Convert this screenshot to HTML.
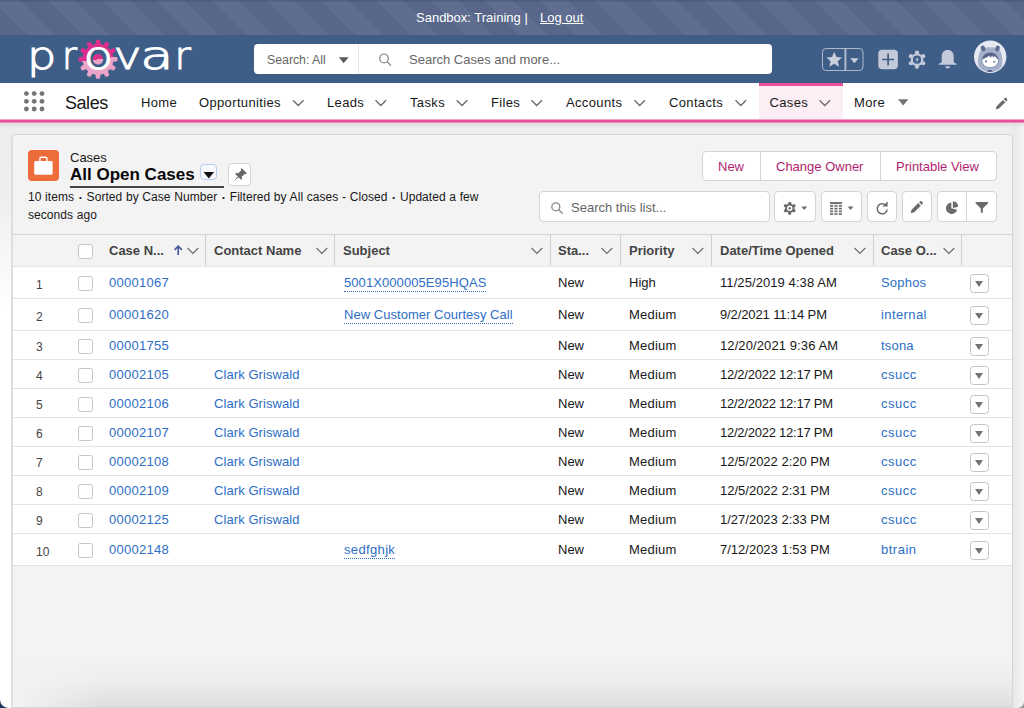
<!DOCTYPE html>
<html lang="en">
<head>
<meta charset="utf-8">
<title>Cases | Salesforce</title>
<style>
*{box-sizing:border-box;margin:0;padding:0}
html,body{width:1024px;height:708px;overflow:hidden}
body{position:relative;background:#fff;font-family:"Liberation Sans",sans-serif;font-size:13px;color:#181818}
.abs{position:absolute}
a{text-decoration:none;color:#2d6ec6}
/* sandbox banner */
#sandbox{left:0;top:0;width:1024px;height:35px;background:#5b6a8f;background-image:linear-gradient(rgba(0,0,20,0.16),rgba(0,0,20,0) 2.500px),repeating-linear-gradient(45deg,#576689 0,#576689 19.3px,#5e6d90 19.3px,#5e6d90 38.7px);color:#fff;font-size:13px}
#sandbox .t1{left:416px;top:10px;white-space:nowrap}
#sandbox .t2{left:540px;top:10px;white-space:nowrap;text-decoration:underline;color:#fff}
/* header */
#hdr{left:0;top:35px;width:1024px;height:48px;background:#3e5e88}
#gsearch{left:254px;top:9px;width:518px;height:30px;background:#fff;border-radius:4px}
#gsearch .sel{left:13px;top:9px;color:#666;font-size:12.300px;white-space:nowrap}
#gsearch .div{left:104px;top:0;width:1px;height:30px;background:#e5e5e5}
#gsearch .ph{left:155px;top:8px;color:#666;font-size:13px;white-space:nowrap}
/* nav */
#nav{left:0;top:83px;width:1024px;height:36px;background:#fff}
#navline{z-index:3;left:0;top:119px;width:1024px;height:9px;background:linear-gradient(#f3a2c9 0,#f3a2c9 1px,#e8509b 1px,#e8509b 3px,#eb8ab8 3px,#eb8ab8 4px,rgba(0,0,0,0.07) 4px,rgba(0,0,0,0) 9px)}
#nav .app{left:65px;top:10px;font-size:18px;letter-spacing:-0.45px;color:#181818}
#nav .it{top:12px;font-size:13px;letter-spacing:0.35px;color:#181818;white-space:nowrap}
#nav .sel{left:759px;top:0;width:84px;height:36px;background:#fdeef5;border-top:3px solid #e8509b}
/* card */
#card{left:11px;top:134px;width:1002px;height:574px;border:1px solid #d6d6d6;border-left-width:2px;border-left-color:#dedede;border-radius:4px 4px 0 0;background:#f3f3f3}
.btn{background:#fff;border:1px solid #d4d4d4;border-radius:4px}
.brand{color:#b01e6e;font-size:13px;white-space:nowrap}
/* table */
#thead{left:13px;top:234px;width:999px;height:33px;background:#f3f3f3;border-top:1px solid #d4d4d4;border-bottom:1px solid #e6e6e6}
.th{top:8px;font-weight:bold;font-size:13px;color:#444;white-space:nowrap}
.sep{top:0;width:1px;height:31px;background:#d0d0d0}
.row{left:13px;width:999px;background:#fff;border-bottom:1px solid #e3e3e3}
.row span,.row a{position:absolute;white-space:nowrap;font-size:13px}
.cb{position:absolute;left:65px;width:15px;height:15px;border:1px solid #c4c4c4;border-radius:2.5px;background:#fff}
.act{position:absolute;left:957px;width:19px;height:19px;border:1px solid #c4c4c4;border-radius:3.5px;background:#fff}
.act:after{content:"";position:absolute;left:3.800px;top:5.800px;border:4.800px solid transparent;border-top:6.200px solid #747474;border-bottom:0}
.b{font-size:8px;position:relative;top:-1.300px;padding:0 1.200px}
.row .num{font-size:12px;color:#444;margin-top:2px}
.row a.subj{line-height:17px;top:7px;border-bottom:1px dotted #2d6ec6}
</style>
</head>
<body>
<div id="sandbox" class="abs"><span class="abs t1">Sandbox: Training |</span><a class="abs t2">Log out</a></div>
<div id="hdr" class="abs">
<svg class="abs" style="left:0;top:0" width="240" height="48" viewBox="0 35 240 48">
<defs><linearGradient id="gg" gradientUnits="userSpaceOnUse" x1="0" y1="-20" x2="0" y2="20" gradientTransform="rotate(-8)"><stop offset="0.5" stop-color="#dc2e8c"/><stop offset="0.5" stop-color="#eba3c8"/></linearGradient></defs>
<g id="gearg" transform="translate(98 59.3)" fill="url(#gg)"><circle r="15.400"/><path d="M-2.80 -14.00 L-2.00 -19.00 L-1.40 -19.50 L1.40 -19.50 L2.00 -19.00 L2.80 -14.00Z M4.58 -13.52 L7.77 -17.45 L8.54 -17.59 L10.96 -16.19 L11.23 -15.45 L9.42 -10.72Z M10.72 -9.42 L15.45 -11.23 L16.19 -10.96 L17.59 -8.54 L17.45 -7.77 L13.52 -4.58Z M14.00 -2.80 L19.00 -2.00 L19.50 -1.40 L19.50 1.40 L19.00 2.00 L14.00 2.80Z M13.52 4.58 L17.45 7.77 L17.59 8.54 L16.19 10.96 L15.45 11.23 L10.72 9.42Z M9.42 10.72 L11.23 15.45 L10.96 16.19 L8.54 17.59 L7.77 17.45 L4.58 13.52Z M2.80 14.00 L2.00 19.00 L1.40 19.50 L-1.40 19.50 L-2.00 19.00 L-2.80 14.00Z M-4.58 13.52 L-7.77 17.45 L-8.54 17.59 L-10.96 16.19 L-11.23 15.45 L-9.42 10.72Z M-10.72 9.42 L-15.45 11.23 L-16.19 10.96 L-17.59 8.54 L-17.45 7.77 L-13.52 4.58Z M-14.00 2.80 L-19.00 2.00 L-19.50 1.40 L-19.50 -1.40 L-19.00 -2.00 L-14.00 -2.80Z M-13.52 -4.58 L-17.45 -7.77 L-17.59 -8.54 L-16.19 -10.96 L-15.45 -11.23 L-10.72 -9.42Z M-9.42 -10.72 L-11.23 -15.45 L-10.96 -16.19 L-8.54 -17.59 L-7.77 -17.45 L-4.58 -13.52Z"/><circle r="10.4" fill="#3e5e88"/><circle r="5.2"/></g>
<g id="logotext"><text y="69" font-family="'DejaVu Sans Light','DejaVu Sans',sans-serif" font-weight="200" font-size="38.5" fill="#fff" stroke="#fff" stroke-width="1.1"><tspan x="27" textLength="29.33" lengthAdjust="spacingAndGlyphs">p</tspan><tspan x="62.0" textLength="14.88" lengthAdjust="spacingAndGlyphs">r</tspan><tspan x="83.6" textLength="29.80" lengthAdjust="spacingAndGlyphs">o</tspan><tspan x="113.5" textLength="28.02" lengthAdjust="spacingAndGlyphs">v</tspan><tspan x="140.2" textLength="33.27" lengthAdjust="spacingAndGlyphs">a</tspan><tspan x="174.6" textLength="16.30" lengthAdjust="spacingAndGlyphs">r</tspan></text></g>
</svg>
  <div id="gsearch" class="abs">
    <span class="abs sel">Search: All</span>
    <div class="abs div"></div>
    <span class="abs ph">Search Cases and more...</span>
  </div>
  <svg class="abs" style="left:330px;top:9px" width="70" height="30" viewBox="0 0 70 30">
    <path d="M8.800 13.300h9.800l-4.900 6z" fill="#5a5a5a"/>
    <circle cx="54" cy="14.4" r="4.3" fill="none" stroke="#969696" stroke-width="1.4"/><path d="M57.2 17.700l3.400 3.600" stroke="#969696" stroke-width="1.5" stroke-linecap="round"/>
  </svg>
  <svg class="abs" style="left:810px;top:0" width="214" height="48" viewBox="810 35 214 48">
    <rect x="822.5" y="48.500" width="40.500" height="22" rx="3.500" fill="none" stroke="#aeb8cc" stroke-width="1"/>
    <path d="M845.400 48.500v22" stroke="#aeb8cc" stroke-width="2"/>
    <path d="M834.200 51.800l2.200 5.200 5.600 0.500-4.200 3.700 1.300 5.500-4.900-2.900-4.900 2.900 1.300-5.500-4.200-3.700 5.600-0.500z" fill="#c9cfdc"/>
    <path d="M850.200 58.300h8.400l-4.200 5z" fill="#c9cfdc"/>
    <rect x="878.300" y="49.700" width="19.600" height="19.600" rx="4" fill="#c3c9d8"/>
    <path d="M888.100 53.500v12M882.100 59.500h12" stroke="#3e5e88" stroke-width="1.700"/>
    <g transform="translate(917 59.700)" fill="#c3c9d8">
      <circle r="6.400"/>
      <circle cx="0" cy="-7.100" r="2.100"/><circle cx="6.150" cy="-3.550" r="2.100"/><circle cx="6.150" cy="3.550" r="2.100"/><circle cx="0" cy="7.100" r="2.100"/><circle cx="-6.150" cy="3.550" r="2.100"/><circle cx="-6.150" cy="-3.550" r="2.100"/>
      <circle r="4.100" fill="#3e5e88"/>
      <path d="M1 -3l-2.800 3.400h1.800l-1 2.800 3-3.600h-1.800z"/>
    </g>
    <path d="M947.700 50.100c-3.700 0-6 2.700-6 6.200v5.200c0 0.900-0.800 1.500-2.400 1.900-0.800 0.200-0.800 1.400 0.100 1.400h16.600c0.900 0 0.900-1.200 0.100-1.400-1.600-0.400-2.400-1-2.400-1.900v-5.200c0-3.500-2.300-6.200-6-6.200z" fill="#c3c9d8"/>
    <path d="M945.400 66.200h4.600c0 1.300-1 2.200-2.300 2.200s-2.300-0.900-2.300-2.200z" fill="#c3c9d8"/>
    <circle cx="990.200" cy="56.800" r="16.200" fill="#e7e9f0"/>
    <clipPath id="avc"><circle cx="990.200" cy="56.800" r="15.200"/></clipPath>
    <g clip-path="url(#avc)">
      
      
      <path d="M978 62c0-7 1.500-11.500 4.500-13.500 2.300-1 4.500-1.300 7.700-1.300s5.400 0.300 7.700 1.300c3 2 4.500 6.500 4.500 13.500 0 5-2 9-4 12h-16.400c-2-3-4-7-4-12z" fill="#a6b1cc"/>
      <ellipse cx="983.100" cy="48.500" rx="2.100" ry="3" transform="rotate(-20 983.100 48.500)" fill="#5d6b8f"/><ellipse cx="997.500" cy="48.500" rx="2.100" ry="3" transform="rotate(20 997.500 48.500)" fill="#5d6b8f"/><ellipse cx="990.200" cy="60.300" rx="9.200" ry="8" fill="#8d9aba"/>
      <ellipse cx="990.200" cy="60.800" rx="7.900" ry="6.300" fill="#fff"/>
      <path d="M982.400 59.500c0.300-4 3.600-6.700 7.800-6.700s7.500 2.700 7.800 6.700c-1.300-0.800-2.300-2-2.900-3.400l-2.500 1.700 0.300-2.300-3.400 2.400 0.700-2.500c-2.600 1.300-5.300 2.700-7.800 4.100z" fill="#56648a"/>
      <circle cx="986" cy="61.400" r="1.050" fill="#6b789c"/><circle cx="994.200" cy="61.700" r="1.050" fill="#6b789c"/>
      <path d="M986.800 72.200c0.400-1.600 1.600-2.500 3-2.500s2.600 0.900 3 2.500z" fill="#56648a"/>
    </g>
  </svg>

</div>
<div id="nav" class="abs">
  <span class="abs app">Sales</span>
  <div class="abs sel"></div>
<svg class="abs" style="left:0;top:0" width="1024" height="36" viewBox="0 83 1024 36">
<g fill="#747474"><circle cx="26.4" cy="93.6" r="2.400"/><circle cx="34.2" cy="93.6" r="2.400"/><circle cx="42" cy="93.6" r="2.400"/><circle cx="26.4" cy="101.3" r="2.400"/><circle cx="34.2" cy="101.3" r="2.400"/><circle cx="42" cy="101.3" r="2.400"/><circle cx="26.4" cy="109" r="2.400"/><circle cx="34.2" cy="109" r="2.400"/><circle cx="42" cy="109" r="2.400"/></g><path d="M293 100.200l5.300 5.300 5.300-5.300" fill="none" stroke="#6a6a6a" stroke-width="1.300"/><path d="M375.5 100.200l5.300 5.300 5.300-5.300" fill="none" stroke="#6a6a6a" stroke-width="1.300"/><path d="M456.7 100.200l5.300 5.300 5.300-5.300" fill="none" stroke="#6a6a6a" stroke-width="1.300"/><path d="M531.4 100.200l5.300 5.300 5.300-5.300" fill="none" stroke="#6a6a6a" stroke-width="1.300"/><path d="M634.4 100.200l5.300 5.300 5.300-5.300" fill="none" stroke="#6a6a6a" stroke-width="1.300"/><path d="M735.5 100.200l5.300 5.300 5.300-5.300" fill="none" stroke="#6a6a6a" stroke-width="1.300"/><path d="M819.5 100.200l5.300 5.300 5.300-5.300" fill="none" stroke="#6a6a6a" stroke-width="1.300"/>
<path d="M898 99.200h10.400l-5.200 6.400z" fill="#747474"/>
<path d="M996.500 107.500l0.900-3.300 6.300-6.300 2.400 2.400-6.300 6.300zM1004.500 97.100l1-1c0.400-0.400 1-0.400 1.400 0l1 1c0.400 0.400 0.400 1 0 1.400l-1 1z" fill="#6b6b6b" transform="translate(-0.800 2)"/>
</svg>
  <span class="abs it" style="left:141px">Home</span>
  <span class="abs it" style="left:199px">Opportunities</span>
  <span class="abs it" style="left:327px">Leads</span>
  <span class="abs it" style="left:410px">Tasks</span>
  <span class="abs it" style="left:491px">Files</span>
  <span class="abs it" style="left:566px">Accounts</span>
  <span class="abs it" style="left:669px">Contacts</span>
  <span class="abs it" style="left:769.5px">Cases</span>
  <span class="abs it" style="left:854px">More</span>
</div>
<div id="navline" class="abs"></div>
<div class="abs" style="left:0;top:122px;width:1024px;height:190px;background:linear-gradient(#ededed 0,#efefef 40%,#fff 100%)"></div>
<div class="abs" style="left:1013px;top:122px;width:11px;height:586px;background:linear-gradient(to right,#e8e8e8,#f4f4f4)"></div>
<div id="card" class="abs"></div>
<div class="abs" style="left:13px;top:655px;width:999px;height:52px;background:linear-gradient(to right,#f3f3f3 0,rgba(243,243,243,0) 90px),linear-gradient(rgba(0,0,0,0) 0,rgba(0,0,0,0.025) 50%,rgba(0,0,0,0.085) 100%)"></div>
<svg class="abs" style="left:0;top:696px" width="1024" height="12" viewBox="0 696 1024 12"><path d="M0 708V699.500A8.500 8.500 0 0 0 8.500 708Z" fill="#1f3a60"/><path d="M1024 708V701.500A6.500 6.500 0 0 1 1017.500 708Z" fill="#9a9a9a"/></svg>
<div id="lvh">
  <div class="abs" style="left:28px;top:150px;width:31px;height:31px;border-radius:4px;background:#ee6b3b"></div>
  <svg class="abs" style="left:28px;top:150px" width="31" height="31" viewBox="0 0 31 31"><rect x="6.200" y="10.900" width="18.400" height="13.900" rx="1.600" fill="#fff"/><path d="M11.900 11v-2.400c0-0.800 0.600-1.300 1.300-1.300h4.400c0.800 0 1.300 0.600 1.300 1.300v2.400" fill="none" stroke="#fff" stroke-width="1.400"/></svg>
  <span class="abs" style="left:70px;top:150px;font-size:13px;color:#181818">Cases</span>
  <span class="abs" id="lvtitle" style="left:70px;top:164px;font-size:17px;font-weight:bold;color:#080707;white-space:nowrap;line-height:22px">All Open Cases</span>
  <div class="abs" style="left:70px;top:186px;width:154px;height:1.500px;background:#444"></div>
  <div class="abs" style="left:200px;top:164px;width:17px;height:16px;border:1.500px solid #b9cdee;border-radius:4px;background:#f6f8fc"></div>
  <svg class="abs" style="left:200px;top:164px" width="17" height="16"><path d="M3.500 8h10.600l-5.300 6.600z" fill="#111"/></svg>
  <div class="abs btn" style="left:228px;top:163px;width:23px;height:23px"></div>
  <svg class="abs" style="left:226.500px;top:165px" width="23" height="23" viewBox="0 0 23 23"><g transform="rotate(45 11.500 11.500)" fill="#666"><rect x="9" y="4" width="5" height="6.500"/><rect x="7.300" y="10" width="8.400" height="2" rx="0.500"/><rect x="7.800" y="3.300" width="7.400" height="1.600" rx="0.500"/><path d="M10.900 12h1.200l-0.600 6.500z"/></g></svg>
  <span class="abs" id="lvinfo" style="left:28px;top:189px;width:480px;font-size:12px;line-height:17px;color:#181818;word-spacing:0.300px;letter-spacing:0.045px">10 items <span class="b">•</span> Sorted by Case Number <span class="b">•</span> Filtered by All cases - Closed <span class="b">•</span> Updated a few seconds ago</span>

  <div class="abs btn" style="left:702px;top:151px;width:295px;height:30px"></div>
  <div class="abs" style="left:760px;top:152px;width:1px;height:28px;background:#d4d4d4"></div>
  <div class="abs" style="left:880px;top:152px;width:1px;height:28px;background:#d4d4d4"></div>
  <span class="abs brand" style="left:718px;top:159px">New</span>
  <span class="abs brand" style="left:776px;top:159px">Change Owner</span>
  <span class="abs brand" style="left:896px;top:159px">Printable View</span>

  <div class="abs btn" style="left:539px;top:191px;width:231px;height:31px"></div>
  <svg class="abs" style="left:548px;top:199px" width="18" height="18" viewBox="0 0 18 18"><circle cx="7.800" cy="7.800" r="4" fill="none" stroke="#888" stroke-width="1.300"/><path d="M10.800 10.800l3.400 3.400" stroke="#888" stroke-width="1.400" stroke-linecap="round"/></svg>
  <span class="abs" style="left:571px;top:200px;font-size:13px;color:#666;white-space:nowrap">Search this list...</span>

  <div class="abs btn" style="left:774px;top:191px;width:42px;height:31px"></div>
  <div class="abs btn" style="left:821px;top:191px;width:41px;height:31px"></div>
  <div class="abs btn" style="left:867px;top:191px;width:30px;height:31px"></div>
  <div class="abs btn" style="left:902px;top:191px;width:30px;height:31px"></div>
  <div class="abs btn" style="left:937px;top:191px;width:60px;height:31px"></div>
  <div class="abs" style="left:966px;top:192px;width:1px;height:29px;background:#d4d4d4"></div>
  <svg class="abs" style="left:770px;top:185px" width="240" height="45" viewBox="770 185 240 45">
    <g transform="translate(789.700 208.300)" fill="#6b6b6b">
      <circle r="4.700"/><rect x="-1.500" y="-6.400" width="3" height="3.600" rx="0.900" transform="rotate(0)"/><rect x="-1.500" y="-6.400" width="3" height="3.600" rx="0.900" transform="rotate(60)"/><rect x="-1.500" y="-6.400" width="3" height="3.600" rx="0.900" transform="rotate(120)"/><rect x="-1.500" y="-6.400" width="3" height="3.600" rx="0.900" transform="rotate(180)"/><rect x="-1.500" y="-6.400" width="3" height="3.600" rx="0.900" transform="rotate(240)"/><rect x="-1.500" y="-6.400" width="3" height="3.600" rx="0.900" transform="rotate(300)"/>
      <circle r="2.700" fill="#fff"/><circle r="1.200"/>
    </g>
    <path d="M801.400 206.400h5.800l-2.900 3.600z" fill="#6b6b6b"/>
    <g fill="#6e6e6e"><rect x="830" y="202.100" width="11.900" height="2"/><rect x="830" y="205.1" width="3.100" height="1.700"/><rect x="834.4" y="205.1" width="3.100" height="1.700"/><rect x="838.8" y="205.1" width="3.100" height="1.700"/><rect x="830" y="207.8" width="3.100" height="1.700"/><rect x="834.4" y="207.8" width="3.100" height="1.700"/><rect x="838.8" y="207.8" width="3.100" height="1.700"/><rect x="830" y="210.5" width="3.100" height="1.700"/><rect x="834.4" y="210.5" width="3.100" height="1.700"/><rect x="838.8" y="210.5" width="3.100" height="1.700"/><rect x="830" y="213.2" width="3.100" height="1.700"/><rect x="834.4" y="213.2" width="3.100" height="1.700"/><rect x="838.8" y="213.2" width="3.100" height="1.700"/></g>
    <path d="M847.700 206.400h5.800l-2.900 3.600z" fill="#6b6b6b"/>
    <path d="M885.700 205.200a5 5 0 1 0 1.500 4.300" fill="none" stroke="#6b6b6b" stroke-width="1.500"/>
    <path d="M887.600 201.200v5.200h-5.200z" fill="#6b6b6b"/>
    <path d="M910.700 213.200l0.900-3.500 6.600-6.600 2.600 2.600-6.600 6.600zM919.100 202.200l1-1c0.400-0.400 1-0.400 1.400 0l1.200 1.200c0.400 0.400 0.400 1 0 1.400l-1 1z" fill="#6b6b6b"/>
    <path d="M951.300 202.600a5.700 5.700 0 1 0 5.800 7.200l-5.800-1.500z" fill="#6b6b6b"/>
    <path d="M952.900 201.300a5.700 5.700 0 0 1 5.200 5.400l-5.200 1.200z" fill="#6b6b6b"/>
    <path d="M975.600 201.900h12.400v1.300l-5.200 5.300v4.700l-2 -0.900v-3.800l-5.200-5.300z" fill="#6b6b6b"/>
  </svg>
</div>
<div id="thead" class="abs">
  <i class="cb" style="top:9px"></i>
  <span class="abs th" style="left:96px">Case N...</span>
  <span class="abs th" style="left:201px">Contact Name</span>
  <span class="abs th" style="left:330px">Subject</span>
  <span class="abs th" style="left:545px">Sta...</span>
  <span class="abs th" style="left:616px">Priority</span>
  <span class="abs th" style="left:707px">Date/Time Opened</span>
  <span class="abs th" style="left:868px">Case O...</span>
  <div class="abs sep" style="left:192px"></div><div class="abs sep" style="left:321px"></div><div class="abs sep" style="left:537px"></div><div class="abs sep" style="left:607px"></div><div class="abs sep" style="left:698px"></div><div class="abs sep" style="left:860px"></div><div class="abs sep" style="left:948px"></div>
</div>
<svg class="abs" style="left:0;top:235px" width="1024" height="31" viewBox="0 235 1024 31"><path d="M187.5 248l5.400 5.400 5.400-5.400" fill="none" stroke="#6e6e6e" stroke-width="1.200"/><path d="M316.5 248l5.400 5.400 5.400-5.400" fill="none" stroke="#6e6e6e" stroke-width="1.200"/><path d="M531.5 248l5.400 5.400 5.400-5.400" fill="none" stroke="#6e6e6e" stroke-width="1.200"/><path d="M601.5 248l5.400 5.400 5.400-5.400" fill="none" stroke="#6e6e6e" stroke-width="1.200"/><path d="M692.5 248l5.400 5.400 5.400-5.400" fill="none" stroke="#6e6e6e" stroke-width="1.200"/><path d="M854.5 248l5.400 5.400 5.400-5.400" fill="none" stroke="#6e6e6e" stroke-width="1.200"/><path d="M943.5 248l5.400 5.400 5.400-5.400" fill="none" stroke="#6e6e6e" stroke-width="1.200"/><path d="M178.200 255v-8.300M174.600 249.900l3.600-3.700 3.600 3.700" fill="none" stroke="#43599a" stroke-width="1.600"/></svg>
<div id="rows">
<div class="abs row" style="top:267px;height:32px;line-height:31px"><span class="num" style="left:23px;margin-top:3px">1</span><i class="cb" style="top:9px"></i><a style="left:96px;letter-spacing:0.28px">00001067</a><a class="subj" style="left:331px;letter-spacing:0.08px">5001X000005E95HQAS</a><span style="left:545px">New</span><span style="left:616px">High</span><span style="left:707px;letter-spacing:0.08px">11/25/2019 4:38 AM</span><a style="left:868px;letter-spacing:0.2px">Sophos</a><i class="act" style="top:7px"></i></div>
<div class="abs row" style="top:299px;height:32px;line-height:31px"><span class="num" style="left:23px;margin-top:3px">2</span><i class="cb" style="top:9px"></i><a style="left:96px;letter-spacing:0.28px">00001620</a><a class="subj" style="left:331px;letter-spacing:0.04px">New Customer Courtesy Call</a><span style="left:545px">New</span><span style="left:616px;letter-spacing:0.2px">Medium</span><span style="left:707px;letter-spacing:-0.12px">9/2/2021 11:14 PM</span><a style="left:868px;letter-spacing:0.4px">internal</a><i class="act" style="top:7px"></i></div>
<div class="abs row" style="top:331px;height:29px;line-height:30px"><span class="num" style="left:23px;margin-top:1px">3</span><i class="cb" style="top:8px"></i><a style="left:96px;letter-spacing:0.28px">00001755</a><span style="left:545px">New</span><span style="left:616px;letter-spacing:0.2px">Medium</span><span style="left:707px;letter-spacing:0.1px">12/20/2021 9:36 AM</span><a style="left:868px;letter-spacing:0.2px">tsona</a><i class="act" style="top:6px"></i></div>
<div class="abs row" style="top:360px;height:29px;line-height:30px"><span class="num" style="left:23px;margin-top:1px">4</span><i class="cb" style="top:8px"></i><a style="left:96px;letter-spacing:0.28px">00002105</a><a style="left:201px;letter-spacing:0.08px">Clark Griswald</a><span style="left:545px">New</span><span style="left:616px;letter-spacing:0.2px">Medium</span><span style="left:707px;letter-spacing:-0.24px">12/2/2022 12:17 PM</span><a style="left:868px;letter-spacing:0.5px">csucc</a><i class="act" style="top:6px"></i></div>
<div class="abs row" style="top:389px;height:29px;line-height:30px"><span class="num" style="left:23px;margin-top:1px">5</span><i class="cb" style="top:8px"></i><a style="left:96px;letter-spacing:0.28px">00002106</a><a style="left:201px;letter-spacing:0.08px">Clark Griswald</a><span style="left:545px">New</span><span style="left:616px;letter-spacing:0.2px">Medium</span><span style="left:707px;letter-spacing:-0.24px">12/2/2022 12:17 PM</span><a style="left:868px;letter-spacing:0.5px">csucc</a><i class="act" style="top:6px"></i></div>
<div class="abs row" style="top:418px;height:29px;line-height:30px"><span class="num" style="left:23px;margin-top:1px">6</span><i class="cb" style="top:8px"></i><a style="left:96px;letter-spacing:0.28px">00002107</a><a style="left:201px;letter-spacing:0.08px">Clark Griswald</a><span style="left:545px">New</span><span style="left:616px;letter-spacing:0.2px">Medium</span><span style="left:707px;letter-spacing:-0.24px">12/2/2022 12:17 PM</span><a style="left:868px;letter-spacing:0.5px">csucc</a><i class="act" style="top:6px"></i></div>
<div class="abs row" style="top:447px;height:29px;line-height:30px"><span class="num" style="left:23px;margin-top:1px">7</span><i class="cb" style="top:8px"></i><a style="left:96px;letter-spacing:0.28px">00002108</a><a style="left:201px;letter-spacing:0.08px">Clark Griswald</a><span style="left:545px">New</span><span style="left:616px;letter-spacing:0.2px">Medium</span><span style="left:707px">12/5/2022 2:20 PM</span><a style="left:868px;letter-spacing:0.5px">csucc</a><i class="act" style="top:6px"></i></div>
<div class="abs row" style="top:476px;height:29px;line-height:30px"><span class="num" style="left:23px;margin-top:1px">8</span><i class="cb" style="top:8px"></i><a style="left:96px;letter-spacing:0.28px">00002109</a><a style="left:201px;letter-spacing:0.08px">Clark Griswald</a><span style="left:545px">New</span><span style="left:616px;letter-spacing:0.2px">Medium</span><span style="left:707px">12/5/2022 2:31 PM</span><a style="left:868px;letter-spacing:0.5px">csucc</a><i class="act" style="top:6px"></i></div>
<div class="abs row" style="top:505px;height:29px;line-height:30px"><span class="num" style="left:23px;margin-top:1px">9</span><i class="cb" style="top:8px"></i><a style="left:96px;letter-spacing:0.28px">00002125</a><a style="left:201px;letter-spacing:0.08px">Clark Griswald</a><span style="left:545px">New</span><span style="left:616px;letter-spacing:0.2px">Medium</span><span style="left:707px">1/27/2023 2:33 PM</span><a style="left:868px;letter-spacing:0.5px">csucc</a><i class="act" style="top:6px"></i></div>
<div class="abs row" style="top:534px;height:32px;line-height:31px"><span class="num" style="left:23px;margin-top:3px">10</span><i class="cb" style="top:9px"></i><a style="left:96px;letter-spacing:0.28px">00002148</a><a class="subj" style="left:331px;letter-spacing:0.35px">sedfghjk</a><span style="left:545px">New</span><span style="left:616px;letter-spacing:0.2px">Medium</span><span style="left:707px">7/12/2023 1:53 PM</span><a style="left:868px;letter-spacing:0.5px">btrain</a><i class="act" style="top:7px"></i></div>
</div>
</body>
</html>
